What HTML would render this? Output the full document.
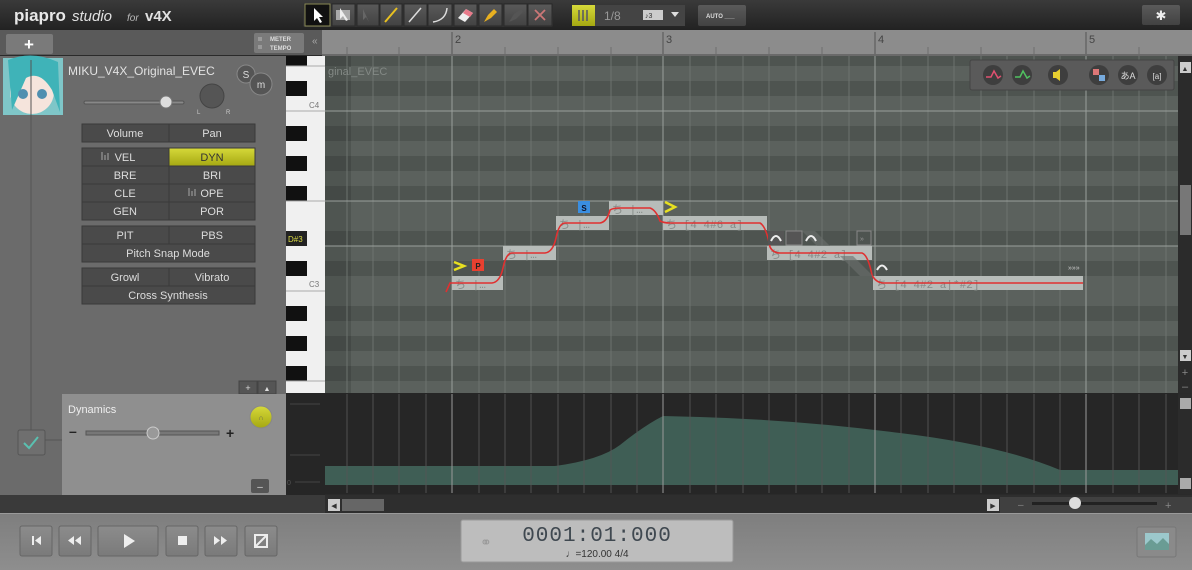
<!DOCTYPE html>
<html><head><meta charset="utf-8"><style>
html,body{margin:0;padding:0;background:#2a2a2a;}
svg{display:block;font-family:"Liberation Sans",sans-serif;}
</style></head><body>
<svg width="1192" height="570" viewBox="0 0 1192 570" xmlns="http://www.w3.org/2000/svg">
<defs>
<linearGradient id="top" x1="0" y1="0" x2="0" y2="1"><stop offset="0" stop-color="#3a3a3a"/><stop offset="1" stop-color="#222"/></linearGradient>
<linearGradient id="btn" x1="0" y1="0" x2="0" y2="1"><stop offset="0" stop-color="#5a5a5a"/><stop offset="1" stop-color="#424242"/></linearGradient>
<linearGradient id="tb" x1="0" y1="0" x2="0" y2="1"><stop offset="0" stop-color="#7e7e7e"/><stop offset="1" stop-color="#8e8e8e"/></linearGradient>
<linearGradient id="tbtn" x1="0" y1="0" x2="0" y2="1"><stop offset="0" stop-color="#8c8c8c"/><stop offset="1" stop-color="#7a7a7a"/></linearGradient>
<linearGradient id="yel" x1="0" y1="0" x2="0" y2="1"><stop offset="0" stop-color="#d6d93a"/><stop offset="1" stop-color="#a5a812"/></linearGradient>
</defs>
<!-- top bar -->
<rect x="0" y="0" width="1192" height="30" fill="url(#top)"/>
<text x="14" y="21" font-size="17" font-weight="bold" fill="#e8e8e8">piapro</text>
<text x="72" y="21" font-size="15" font-style="italic" fill="#e0e0e0">studio</text>
<text x="127" y="21" font-size="10" font-style="italic" fill="#bbb">for</text>
<text x="145" y="21" font-size="15" font-weight="bold" fill="#e0e0e0">v4X</text>
<rect x="303" y="3" width="250" height="24" fill="#333" rx="2"/>
<g fill="url(#btn)" stroke="#2a2a2a">
<rect x="332" y="4" width="23" height="22"/><rect x="357" y="4" width="22" height="22"/><rect x="380" y="4" width="22" height="22"/><rect x="404" y="4" width="23" height="22"/><rect x="428" y="4" width="24" height="22"/><rect x="454" y="4" width="23" height="22"/><rect x="479" y="4" width="23" height="22"/><rect x="504" y="4" width="23" height="22"/><rect x="528" y="4" width="24" height="22"/>
</g>
<rect x="305" y="4" width="25" height="22" fill="#111" stroke="#8a8a55"/>
<path d="M314 8 L314 21 L317 18 L320 23 L322 22 L319 17 L323 17 Z" fill="#fff"/>
<rect x="336" y="10" width="14" height="10" fill="#aaa"/><path d="M340 8 L340 19 L343 16 L346 21 L348 20Z" fill="#eee"/>
<path d="M363 9 L363 20 L366 17 L369 22Z" fill="#666"/>
<path d="M385 22 L397 8" stroke="#e8c020" stroke-width="2"/>
<path d="M409 22 L421 8" stroke="#ddd" stroke-width="1.5"/>
<path d="M433 22 Q446 20 447 8" stroke="#ddd" stroke-width="1.5" fill="none"/>
<path d="M458 18 L466 9 L473 13 L465 22Z" fill="#eee"/><path d="M466 9 L473 13 L470 17 L463 13Z" fill="#e87a8a"/>
<path d="M484 22 L488 15 L494 9 L497 12 L491 18Z" fill="#e8b020"/>
<path d="M509 22 L514 14 L521 9 L523 12 L516 19Z" fill="#555"/>
<path d="M535 10 L545 20 M545 10 L535 20" stroke="#c77" stroke-width="1.8"/>
<rect x="572" y="5" width="23" height="21" fill="url(#yel)"/>
<path d="M579 10v11M583 10v11M587 10v11" stroke="#556" stroke-width="1.5"/>
<rect x="595" y="5" width="90" height="21" fill="#444"/>
<text x="604" y="20" font-size="12" fill="#999">1/8</text>
<rect x="643" y="10" width="20" height="10" fill="#ccc"/><text x="645" y="18" font-size="7" fill="#333">♪3</text>
<path d="M671 12 L679 12 L675 17Z" fill="#ddd"/>
<rect x="698" y="5" width="48" height="21" fill="url(#btn)" rx="2"/>
<text x="706" y="18" font-size="6" fill="#ddd" font-weight="bold">AUTO ___</text>
<rect x="1142" y="5" width="38" height="20" fill="url(#btn)" rx="2"/>
<text x="1161" y="20" font-size="13" fill="#eee" text-anchor="middle">✱</text>

<!-- second row -->
<rect x="0" y="30" width="322" height="25" fill="#5a5a5a"/>
<rect x="6" y="34" width="47" height="20" fill="#7a7a7a" rx="2"/>
<text x="29" y="50" font-size="17" fill="#fff" text-anchor="middle" font-weight="bold">+</text>
<rect x="254" y="33" width="50" height="20" fill="#7a7a7a" rx="2"/>
<text x="270" y="41" font-size="6" fill="#ddd" font-weight="bold">METER</text><text x="270" y="50" font-size="6" fill="#ddd" font-weight="bold">TEMPO</text>
<rect x="258" y="37" width="4" height="4" fill="#999"/><rect x="258" y="45" width="4" height="4" fill="#999"/>
<text x="312" y="44" font-size="10" fill="#aaa">«</text>
<rect x="322" y="30" width="870" height="25" fill="#8c8c8c"/>
<rect x="322" y="54" width="870" height="2" fill="#6a6a6a"/>
<g stroke="#6e6e6e">
<path d="M347 47v7M399 47v7M505 47v7M558 47v7M611 47v7M716 47v7M769 47v7M822 47v7M928 47v7M981 47v7M1034 47v7M1139 47v7"/>
</g>
<g stroke="#555"><path d="M452 32v22M663 32v22M875 32v22M1086 32v22"/></g>
<g font-size="11" fill="#444"><text x="455" y="43">2</text><text x="666" y="43">3</text><text x="878" y="43">4</text><text x="1089" y="43">5</text></g>

<!-- left panel -->
<rect x="0" y="56" width="286" height="439" fill="#6b6b6b"/>
<rect x="3" y="58" width="60" height="57" fill="#7fc6c8"/>
<circle cx="32" cy="92" r="22" fill="#f5e4dc"/>
<path d="M8 60 Q32 50 58 62 L60 112 L52 90 Q40 70 26 78 L12 110 Z" fill="#3fb3b8"/>
<circle cx="23" cy="94" r="5" fill="#4f8fb0"/><circle cx="42" cy="94" r="5" fill="#4f8fb0"/>
<text x="68" y="75" font-size="12" fill="#e2e2e2">MIKU_V4X_Original_EVEC</text>
<circle cx="246" cy="74" r="9" fill="#555" stroke="#888"/><text x="246" y="78" font-size="10" fill="#ddd" text-anchor="middle">S</text>
<circle cx="261" cy="84" r="11" fill="#555" stroke="#888"/><text x="261" y="88" font-size="10" fill="#ddd" text-anchor="middle">m</text>
<rect x="84" y="101" width="100" height="3" rx="1.5" fill="#888" stroke="#555"/>
<circle cx="166" cy="102" r="6" fill="#ddd" stroke="#777"/>
<circle cx="212" cy="96" r="12" fill="#555" stroke="#444"/>
<text x="197" y="114" font-size="6" fill="#ccc">L</text><text x="226" y="114" font-size="6" fill="#ccc">R</text>
<g fill="#4a4a4a" stroke="#3a3a3a">
<rect x="82" y="124" width="87" height="18"/><rect x="169" y="124" width="86" height="18"/>
<rect x="82" y="148" width="87" height="18"/>
<rect x="82" y="166" width="87" height="18"/><rect x="169" y="166" width="86" height="18"/>
<rect x="82" y="184" width="87" height="18"/><rect x="169" y="184" width="86" height="18"/>
<rect x="82" y="202" width="87" height="18"/><rect x="169" y="202" width="86" height="18"/>
<rect x="82" y="226" width="87" height="18"/><rect x="169" y="226" width="86" height="18"/>
<rect x="82" y="244" width="173" height="18"/>
<rect x="82" y="268" width="87" height="18"/><rect x="169" y="268" width="86" height="18"/>
<rect x="82" y="286" width="173" height="18"/>
</g>
<rect x="169" y="148" width="86" height="18" fill="url(#yel)" stroke="#3a3a3a"/>
<g font-size="11" fill="#ddd" text-anchor="middle">
<text x="125" y="137">Volume</text><text x="212" y="137">Pan</text>
<text x="125" y="161">VEL</text><text x="212" y="161" fill="#333">DYN</text>
<text x="125" y="179">BRE</text><text x="212" y="179">BRI</text>
<text x="125" y="197">CLE</text><text x="212" y="197">OPE</text>
<text x="125" y="215">GEN</text><text x="212" y="215">POR</text>
<text x="125" y="239">PIT</text><text x="212" y="239">PBS</text>
<text x="168" y="257">Pitch Snap Mode</text>
<text x="125" y="281">Growl</text><text x="212" y="281">Vibrato</text>
<text x="168" y="299">Cross Synthesis</text>
</g>
<path d="M102 152v8M105 155v5M108 153v7M189 188v8M192 191v5M195 189v7" stroke="#888" stroke-width="1.5"/>
<rect x="239" y="381" width="18" height="13" fill="#555" stroke="#444"/><rect x="258" y="381" width="18" height="13" fill="#555" stroke="#444"/>
<text x="248" y="391" font-size="9" fill="#ddd" text-anchor="middle">+</text><text x="267" y="391" font-size="7" fill="#ddd" text-anchor="middle">▲</text>
<path d="M31 60v372M33 440h30" stroke="#555"/>
<rect x="18" y="430" width="27" height="25" fill="#6f6f6f" stroke="#555" rx="2"/>
<path d="M24 443 L29 448 L38 437" stroke="#5ac0b0" stroke-width="2" fill="none"/>
<rect x="62" y="394" width="224" height="101" fill="#8f8f8f"/>
<text x="68" y="413" font-size="11" fill="#eee">Dynamics</text>
<text x="69" y="436" font-size="14" fill="#222" font-weight="bold">–</text>
<rect x="86" y="431" width="133" height="4" fill="#777" stroke="#555"/>
<circle cx="153" cy="433" r="6" fill="#999" stroke="#ccc"/>
<text x="226" y="438" font-size="14" fill="#222" font-weight="bold">+</text>
<circle cx="261" cy="417" r="11" fill="url(#yel)" stroke="#888"/><text x="261" y="420" font-size="7" fill="#665" text-anchor="middle">∩</text>
<rect x="251" y="479" width="18" height="14" fill="#555" rx="2"/><text x="260" y="490" font-size="10" fill="#ddd" text-anchor="middle">–</text>

<!-- piano -->
<rect x="286" y="56" width="39" height="337" fill="#f0f0f0"/>
<g fill="#111">
<rect x="286" y="56" width="21" height="10"/><rect x="286" y="81" width="21" height="15"/><rect x="286" y="126" width="21" height="15"/><rect x="286" y="156" width="21" height="15"/><rect x="286" y="186" width="21" height="15"/><rect x="286" y="231" width="21" height="15"/><rect x="286" y="261" width="21" height="15"/><rect x="286" y="306" width="21" height="15"/><rect x="286" y="336" width="21" height="15"/><rect x="286" y="366" width="21" height="15"/>
</g>
<g stroke="#aaa"><path d="M286 111h39M286 201h39M286 291h39M286 381h39M286 66h39"/></g>
<rect x="286" y="231" width="21" height="15" fill="#222"/>
<text x="288" y="242" font-size="8" fill="#dd4">D#3</text>
<text x="309" y="108" font-size="8" fill="#777">C4</text>
<text x="309" y="287" font-size="8" fill="#777">C3</text>

<!-- grid -->
<rect x="325" y="56" width="853" height="337" fill="#5b615d"/>
<g fill="#4e5450">
<rect x="325" y="56" width="853" height="10"/><rect x="325" y="81" width="853" height="15"/><rect x="325" y="126" width="853" height="15"/><rect x="325" y="156" width="853" height="15"/><rect x="325" y="186" width="853" height="15"/><rect x="325" y="231" width="853" height="15"/><rect x="325" y="261" width="853" height="15"/><rect x="325" y="306" width="853" height="15"/><rect x="325" y="336" width="853" height="15"/><rect x="325" y="366" width="853" height="15"/>
</g>
<rect x="325" y="56" width="26" height="337" fill="#000" opacity="0.12"/>
<g stroke="#6c726e"><path d="M347 56v337M373 56v337M399 56v337M426 56v337M479 56v337M505 56v337M531 56v337M558 56v337M584 56v337M611 56v337M637 56v337M690 56v337M716 56v337M743 56v337M769 56v337M796 56v337M822 56v337M849 56v337M901 56v337M928 56v337M954 56v337M981 56v337M1007 56v337M1034 56v337M1060 56v337M1113 56v337M1139 56v337M1166 56v337"/></g>
<g stroke="#9aa09c"><path d="M452 56v337M663 56v337M875 56v337M1086 56v337M325 246h853M325 201h853M325 111h853"/></g>
<text x="328" y="75" font-size="11" fill="#838985">ginal_EVEC</text>
<!-- notes -->
<g fill="#b7bcb9">
<rect x="452" y="276" width="51" height="14"/><rect x="503" y="246" width="53" height="14"/><rect x="556" y="216" width="53" height="14"/><rect x="609" y="201" width="54" height="14"/><rect x="663" y="216" width="104" height="14"/><rect x="767" y="246" width="105" height="14"/><rect x="873" y="276" width="210" height="14"/>
</g>
<g font-size="11" fill="#858a87" font-family="Liberation Mono,monospace">
<text x="455" y="288">ち |…</text><text x="506" y="258">ち |…</text><text x="559" y="228">ち |…</text><text x="612" y="213">ち |…</text>
<text x="666" y="228">ち [4 4#6 a]</text><text x="770" y="258">ち [4 4#2 a]</text><text x="876" y="288">ち [4 4#2 a|*#2]</text>
</g>
<path d="M446 292 L450 283 L492 283 Q500 282 503 268 Q506 253 512 253 L545 253 Q553 252 556 238 Q559 223 565 223 L600 223 Q607 222 610 210 Q613 208 620 208 L650 208 Q656 210 660 221 Q664 223 670 223 L760 223 Q766 226 770 247 Q773 253 780 253 L862 253 Q868 255 872 275 Q876 283 884 283 L1083 283" stroke="#e03030" stroke-width="1.6" fill="none"/>
<path d="M454 262 L464 266 L454 270" stroke="#e8e020" stroke-width="2.5" fill="none"/>
<rect x="472" y="259" width="12" height="12" fill="#e84030"/><text x="478" y="269" font-size="8" fill="#222" text-anchor="middle" font-weight="bold">P</text>
<rect x="578" y="201" width="12" height="12" fill="#3a8ee0"/><text x="584" y="211" font-size="8" fill="#112" text-anchor="middle" font-weight="bold">S</text>
<path d="M665 202 L675 207 L665 212" stroke="#e8e020" stroke-width="2.5" fill="none"/>
<rect x="768" y="231" width="16" height="14" fill="#555"/><path d="M771 241 Q776 231 781 241" stroke="#eee" stroke-width="2" fill="none"/>
<rect x="786" y="231" width="16" height="14" fill="#555" stroke="#888"/>
<path d="M802 231 L815 231 L830 246 L817 246Z M840 256 L853 256 L873 276 L860 276Z" fill="#6a706c" opacity="0.6"/>
<path d="M806 241 Q811 231 816 241" stroke="#eee" stroke-width="2" fill="none"/>
<rect x="857" y="231" width="14" height="14" fill="none" stroke="#888"/><text x="860" y="241" font-size="7" fill="#999">»</text>
<path d="M877 270 Q882 261 887 270" stroke="#eee" stroke-width="2" fill="none"/>
<text x="1068" y="270" font-size="7" fill="#ccc">»»»</text>
<!-- overlay toolbar -->
<rect x="970" y="60" width="204" height="30" fill="#5a5a5a" stroke="#444" rx="2"/>
<g fill="#3e3e3e"><circle cx="993" cy="75" r="10"/><circle cx="1022" cy="75" r="10"/><circle cx="1058" cy="75" r="10"/><circle cx="1099" cy="75" r="10"/><circle cx="1128" cy="75" r="10"/><circle cx="1157" cy="75" r="10"/></g>
<path d="M986 77 L991 77 L994 71 L998 78 L1001 76" stroke="#e05070" stroke-width="1.5" fill="none"/>
<path d="M1015 77 L1020 77 L1023 71 L1027 78 L1030 76" stroke="#50c060" stroke-width="1.5" fill="none"/>
<path d="M1053 72h3l4-3v12l-4-3h-3z" fill="#e8d030"/>
<rect x="1093" y="69" width="6" height="6" fill="#d77"/><rect x="1099" y="75" width="6" height="6" fill="#7ad"/>
<text x="1128" y="79" font-size="9" fill="#ddd" text-anchor="middle">あA</text>
<text x="1157" y="79" font-size="8" fill="#ddd" text-anchor="middle">[a]</text>
<!-- right scrollbar -->
<rect x="1178" y="56" width="14" height="340" fill="#2b2b2b"/>
<rect x="1180" y="62" width="11" height="11" fill="#ccc"/><text x="1185" y="71" font-size="7" fill="#333" text-anchor="middle">▲</text>
<rect x="1180" y="185" width="11" height="50" fill="#777"/>
<rect x="1180" y="350" width="11" height="11" fill="#ccc"/><text x="1185" y="359" font-size="7" fill="#333" text-anchor="middle">▼</text>
<text x="1185" y="376" font-size="11" fill="#888" text-anchor="middle">+</text><text x="1185" y="390" font-size="11" fill="#888" text-anchor="middle">–</text>

<!-- dynamics area -->
<rect x="286" y="393" width="906" height="102" fill="#2a2a2a"/>
<rect x="286" y="393" width="39" height="102" fill="#262626"/>
<path d="M290 404h30M290 455h30M295 482h25" stroke="#444"/>
<text x="287" y="485" font-size="7" fill="#555">0</text>
<rect x="325" y="393" width="853" height="101" fill="#262626"/>
<path d="M325 466 L555 466 Q600 460 620 445 Q645 425 663 416 L700 417 Q800 420 900 433 Q1000 445 1060 470 L1086 470 L1178 470 L1178 485 L325 485Z" fill="#3f5e55"/>
<g stroke="#555" opacity="0.9"><path d="M347 394v99M373 394v99M399 394v99M426 394v99M479 394v99M505 394v99M531 394v99M558 394v99M584 394v99M611 394v99M637 394v99M690 394v99M716 394v99M743 394v99M769 394v99M796 394v99M822 394v99M849 394v99M901 394v99M928 394v99M954 394v99M981 394v99M1007 394v99M1034 394v99M1060 394v99M1113 394v99M1139 394v99M1166 394v99"/></g>
<g stroke="#999"><path d="M452 394v99M663 394v99M875 394v99M1086 394v99"/></g>
<rect x="1178" y="394" width="14" height="100" fill="#2b2b2b"/>
<rect x="1180" y="398" width="11" height="11" fill="#aaa"/><rect x="1180" y="478" width="11" height="11" fill="#aaa"/>

<!-- horizontal scroll -->
<rect x="0" y="495" width="1192" height="18" fill="#2e2e2e"/>
<rect x="0" y="495" width="325" height="18" fill="#3a3a3a"/>
<rect x="328" y="499" width="12" height="12" fill="#ccc"/><text x="334" y="508" font-size="7" fill="#333" text-anchor="middle">◀</text>
<rect x="342" y="499" width="42" height="12" fill="#666"/>
<rect x="987" y="499" width="12" height="12" fill="#ccc"/><text x="993" y="508" font-size="7" fill="#333" text-anchor="middle">▶</text>
<rect x="1000" y="497" width="192" height="16" fill="#404040"/>
<text x="1018" y="508" font-size="10" fill="#888">–</text>
<rect x="1032" y="502" width="125" height="3" fill="#222"/>
<circle cx="1075" cy="503" r="6" fill="#ddd"/>
<text x="1165" y="509" font-size="11" fill="#888">+</text>

<!-- transport -->
<rect x="0" y="513" width="1192" height="57" fill="url(#tb)"/>
<rect x="0" y="513" width="1192" height="1" fill="#9a9a9a"/>
<g fill="url(#tbtn)" stroke="#666">
<rect x="20" y="526" width="32" height="30" rx="2"/><rect x="59" y="526" width="32" height="30" rx="2"/><rect x="98" y="526" width="60" height="30" rx="2"/><rect x="166" y="526" width="32" height="30" rx="2"/><rect x="205" y="526" width="32" height="30" rx="2"/><rect x="245" y="526" width="32" height="30" rx="2"/>
</g>
<g fill="#eee">
<rect x="32" y="536" width="2" height="9"/><path d="M35 540.5 L41 536 L41 545Z"/>
<path d="M68 540.5 L74 536 L74 545Z M75 540.5 L81 536 L81 545Z"/>
<path d="M124 534 L135 541 L124 548Z"/>
<rect x="178" y="536" width="9" height="9"/>
<path d="M214 536 L220 540.5 L214 545Z M221 536 L227 540.5 L221 545Z"/>
</g>
<rect x="255" y="535" width="12" height="12" fill="none" stroke="#eee" stroke-width="2"/><path d="M256 546 L266 536" stroke="#eee" stroke-width="2"/>
<rect x="461" y="520" width="272" height="42" fill="#bdbdbd" stroke="#999" rx="2"/>
<text x="480" y="547" font-size="14" fill="#999">⚭</text>
<text x="597" y="541" font-size="21" fill="#3f4850" text-anchor="middle" font-family="Liberation Mono,monospace" letter-spacing="1">0001:01:000</text>
<text x="597" y="557" font-size="10" fill="#333" text-anchor="middle">♩=120.00   4/4</text>
<rect x="1137" y="527" width="39" height="30" fill="#8a8a8a" stroke="#777" rx="2"/>
<rect x="1145" y="533" width="24" height="17" fill="#9cc8cc"/><path d="M1145 545 L1151 539 L1157 544 L1163 538 L1169 544 L1169 550 L1145 550Z" fill="#6a9c94"/>
</svg>
</body></html>
